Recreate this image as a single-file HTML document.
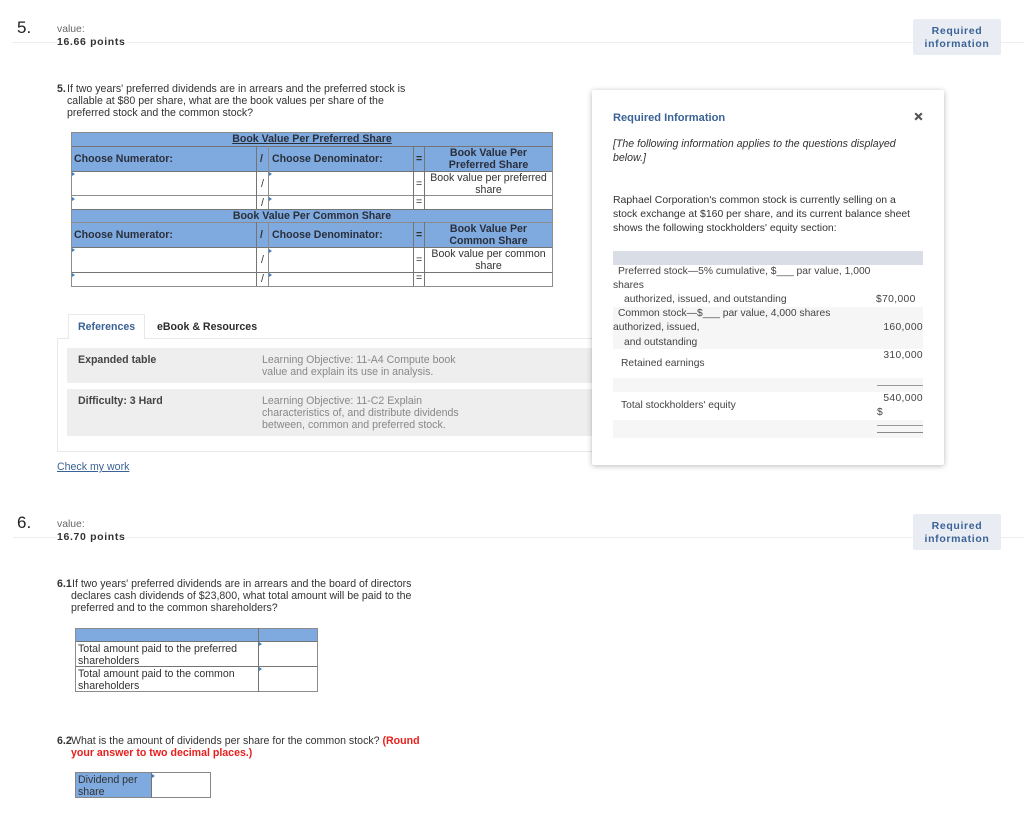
<!DOCTYPE html>
<html><head><meta charset="utf-8">
<style>
html,body{margin:0;padding:0;background:#fff;}
#p{position:relative;width:1024px;height:839px;overflow:hidden;background:#fff;font-family:"Liberation Sans",Arial,sans-serif;color:#333;font-size:10.6px;filter:blur(.25px);}
#p div{position:absolute;}
.t{white-space:nowrap;line-height:14px;height:14px;}
.c{text-align:center;}
.b{font-weight:bold;}
.m{width:0;height:0;border-left:3px solid #3f7fc4;border-top:2px solid transparent;border-bottom:2px solid transparent;}
.l{background:#747474;}
.g{background:#8c8c8c;}
.blue{background:#7eaae0;}
.k{color:#2a2f3a;}
.pop{font-size:10.3px;color:#444;}
.txt{font-size:10.45px;color:#333;}
.rq{background:#e9edf3;border-radius:2px;color:#3a6296;font-weight:bold;font-size:10.5px;letter-spacing:.65px;text-align:center;line-height:13px;}
.n{letter-spacing:.35px;}
</style></head><body>
<div id="p">
<!-- Q5 header -->
<div style="left:12px;top:42px;width:1012px;height:1px;background:#eceef0"></div>
<div class="t" style="left:17px;top:20px;font-size:17px;height:16px;line-height:16px;color:#222">5.</div>
<div class="t" style="left:57px;top:23px;color:#666;font-size:10.4px;background:#fff">value:</div>
<div class="t b" style="left:57px;top:35px;font-size:10.5px;letter-spacing:.65px;background:#fff;padding-right:1px">16.66 points</div>
<div class="rq" style="left:913px;top:19px;width:88px;height:36px"><span style="position:relative;top:6px;display:block">Required<br>information</span></div>

<div class="t" style="left:57px;top:82px"><b>5.</b></div>
<div class="t" style="left:67px;top:82px">If two years' preferred dividends are in arrears and the preferred stock is</div>
<div class="t" style="left:67px;top:94px">callable at $80 per share, what are the book values per share of the</div>
<div class="t" style="left:67px;top:106px">preferred stock and the common stock?</div>

<!-- Table 5 -->
<div class="blue" style="left:72px;top:133px;width:480px;height:38px"></div>
<div class="blue" style="left:72px;top:209px;width:480px;height:38px"></div>
<div class="g" style="left:71px;top:132px;width:482px;height:1px"></div>
<div class="l" style="left:71px;top:146px;width:482px;height:1px"></div>
<div class="l" style="left:71px;top:171px;width:482px;height:1px"></div>
<div class="g" style="left:71px;top:195px;width:482px;height:1px"></div>
<div class="l" style="left:71px;top:209px;width:482px;height:1px"></div>
<div class="g" style="left:71px;top:222px;width:482px;height:1px"></div>
<div class="l" style="left:71px;top:247px;width:482px;height:1px"></div>
<div class="l" style="left:71px;top:272px;width:482px;height:1px"></div>
<div class="g" style="left:71px;top:286px;width:482px;height:1px"></div>
<div class="g" style="left:71px;top:132px;width:1px;height:155px"></div>
<div class="g" style="left:552px;top:132px;width:1px;height:155px"></div>
<div class="l" style="left:256px;top:146px;width:1px;height:63px"></div>
<div class="g" style="left:268px;top:146px;width:1px;height:63px"></div>
<div class="l" style="left:413px;top:146px;width:1px;height:63px"></div>
<div class="l" style="left:424px;top:146px;width:1px;height:63px"></div>
<div class="l" style="left:256px;top:222px;width:1px;height:64px"></div>
<div class="g" style="left:268px;top:222px;width:1px;height:64px"></div>
<div class="l" style="left:413px;top:222px;width:1px;height:64px"></div>
<div class="l" style="left:424px;top:222px;width:1px;height:64px"></div>

<div class="t c b k" style="left:72px;top:132px;width:480px;text-decoration:underline">Book Value Per Preferred Share</div>
<div class="t c b k" style="left:72px;top:209px;width:480px">Book Value Per Common Share</div>

<div class="t b k" style="left:74px;top:152px">Choose Numerator:</div>
<div class="t b" style="left:260px;top:152px">/</div>
<div class="t b k" style="left:272px;top:152px">Choose Denominator:</div>
<div class="t b" style="left:416px;top:152px">=</div>
<div class="t c b k" style="left:425px;top:146px;width:127px">Book Value Per</div>
<div class="t c b k" style="left:425px;top:158px;width:127px">Preferred Share</div>
<div class="t" style="left:261px;top:177px">/</div>
<div class="t" style="left:416px;top:177px">=</div>
<div class="t c" style="left:425px;top:171px;width:127px">Book value per preferred</div>
<div class="t c" style="left:425px;top:183px;width:127px">share</div>
<div class="t" style="left:261px;top:196px">/</div>
<div class="t" style="left:416px;top:195px">=</div>

<div class="t b k" style="left:74px;top:228px">Choose Numerator:</div>
<div class="t b" style="left:260px;top:228px">/</div>
<div class="t b k" style="left:272px;top:228px">Choose Denominator:</div>
<div class="t b" style="left:416px;top:228px">=</div>
<div class="t c b k" style="left:425px;top:222px;width:127px">Book Value Per</div>
<div class="t c b k" style="left:425px;top:234px;width:127px">Common Share</div>
<div class="t" style="left:261px;top:253px">/</div>
<div class="t" style="left:416px;top:253px">=</div>
<div class="t c" style="left:425px;top:247px;width:127px">Book value per common</div>
<div class="t c" style="left:425px;top:259px;width:127px">share</div>
<div class="t" style="left:261px;top:272px">/</div>
<div class="t" style="left:416px;top:271px">=</div>

<div class="m" style="left:72px;top:172px"></div>
<div class="m" style="left:269px;top:172px"></div>
<div class="m" style="left:72px;top:197px"></div>
<div class="m" style="left:269px;top:197px"></div>
<div class="m" style="left:72px;top:248px"></div>
<div class="m" style="left:269px;top:249px"></div>
<div class="m" style="left:72px;top:273px"></div>
<div class="m" style="left:269px;top:273px"></div>

<!-- References -->
<div style="left:57px;top:338px;width:560px;height:114px;border:1px solid #e9e9e9;box-sizing:border-box"></div>
<div style="left:68px;top:314px;width:77px;height:25px;border:1px solid #e9e9e9;border-bottom:0;box-sizing:border-box;background:#fff"></div>
<div class="t b" style="left:78px;top:320px;color:#3a6296">References</div>
<div class="t b" style="left:157px;top:320px;color:#2c2c2c">eBook &amp; Resources</div>
<div style="left:67px;top:348px;width:540px;height:35px;background:#eee"></div>
<div style="left:67px;top:389px;width:540px;height:47px;background:#eee"></div>
<div class="t b" style="left:78px;top:353px;color:#444">Expanded table</div>
<div class="t b" style="left:78px;top:394px;color:#444">Difficulty: 3 Hard</div>
<div class="t" style="left:262px;top:353px;color:#888">Learning Objective: 11-A4 Compute book</div>
<div class="t" style="left:262px;top:365px;color:#888">value and explain its use in analysis.</div>
<div class="t" style="left:262px;top:394px;color:#888">Learning Objective: 11-C2 Explain</div>
<div class="t" style="left:262px;top:406px;color:#888">characteristics of, and distribute dividends</div>
<div class="t" style="left:262px;top:418px;color:#888">between, common and preferred stock.</div>
<div class="t" style="left:57px;top:460px;color:#3a6296;text-decoration:underline">Check my work</div>

<!-- Popup -->
<div style="left:592px;top:90px;width:352px;height:375px;background:#fff;border-radius:2px;box-shadow:0 1px 6px rgba(0,0,0,.28)"></div>
<div class="t b" style="left:613px;top:111px;color:#3a6296;font-size:11.1px">Required Information</div>
<div style="left:914px;top:112px;width:9px;height:9px">
<svg width="9" height="9" viewBox="0 0 9 9" style="display:block"><path d="M1.2 1.2L7.8 7.8M7.8 1.2L1.2 7.8" stroke="#555" stroke-width="2.1" fill="none"/></svg></div>
<div class="t" style="left:613px;top:137px;font-style:italic;color:#333;font-size:10.6px">[The following information applies to the questions displayed</div>
<div class="t" style="left:613px;top:151px;font-style:italic;color:#333;font-size:10.6px">below.]</div>
<div class="t txt" style="left:613px;top:194px">Raphael Corporation's common stock is currently selling on a</div>
<div class="t txt" style="left:613px;top:208px">stock exchange at $160 per share, and its current balance sheet</div>
<div class="t txt" style="left:613px;top:222px">shows the following stockholders' equity section:</div>
<div style="left:613px;top:251px;width:310px;height:14px;background:#d8dde6"></div>
<div style="left:613px;top:307px;width:310px;height:42px;background:#f6f6f6"></div>
<div style="left:613px;top:378px;width:310px;height:14px;background:#f6f6f6"></div>
<div style="left:613px;top:420px;width:310px;height:18px;background:#f6f6f6"></div>
<div style="left:877px;top:385px;width:46px;height:1px;background:#999"></div>
<div style="left:877px;top:425px;width:46px;height:1px;background:#999"></div>
<div style="left:877px;top:432px;width:46px;height:1px;background:#888"></div>
<div class="t pop" style="left:618px;top:265px">Preferred stock&mdash;5% cumulative, $___ par value, 1,000</div>
<div class="t pop" style="left:613px;top:279px">shares</div>
<div class="t pop" style="left:624px;top:293px">authorized, issued, and outstanding</div>
<div class="t pop" style="left:618px;top:307px">Common stock&mdash;$___ par value, 4,000 shares</div>
<div class="t pop" style="left:613px;top:321px">authorized, issued,</div>
<div class="t pop" style="left:624px;top:336px">and outstanding</div>
<div class="t pop" style="left:621px;top:357px">Retained earnings</div>
<div class="t pop" style="left:621px;top:399px">Total stockholders' equity</div>
<div class="t pop n" style="left:876px;top:293px">$70,000</div>
<div class="t pop n" style="right:101px;top:321px">160,000</div>
<div class="t pop n" style="right:101px;top:349px">310,000</div>
<div class="t pop n" style="right:101px;top:392px">540,000</div>
<div class="t pop" style="left:877px;top:406px">$</div>

<!-- Q6 -->
<div style="left:13px;top:537px;width:1011px;height:1px;background:#eceef0"></div>
<div class="t" style="left:17px;top:515px;font-size:17px;height:16px;line-height:16px;color:#222">6.</div>
<div class="t" style="left:57px;top:518px;color:#666;font-size:10.4px;background:#fff">value:</div>
<div class="t b" style="left:57px;top:530px;font-size:10.5px;letter-spacing:.65px;background:#fff;padding-right:1px">16.70 points</div>
<div class="rq" style="left:913px;top:514px;width:88px;height:36px"><span style="position:relative;top:6px;display:block">Required<br>information</span></div>

<div class="t" style="left:57px;top:577px"><b>6.1</b></div>
<div class="t" style="left:72px;top:577px">If two years' preferred dividends are in arrears and the board of directors</div>
<div class="t" style="left:71px;top:589px">declares cash dividends of $23,800, what total amount will be paid to the</div>
<div class="t" style="left:71px;top:601px">preferred and to the common shareholders?</div>

<div class="blue" style="left:76px;top:628px;width:241px;height:14px"></div>
<div class="g" style="left:75px;top:628px;width:243px;height:1px"></div>
<div class="l" style="left:75px;top:641px;width:243px;height:1px"></div>
<div class="l" style="left:75px;top:666px;width:243px;height:1px"></div>
<div class="g" style="left:75px;top:691px;width:243px;height:1px"></div>
<div class="g" style="left:75px;top:628px;width:1px;height:64px"></div>
<div class="g" style="left:317px;top:628px;width:1px;height:64px"></div>
<div class="l" style="left:258px;top:628px;width:1px;height:64px"></div>
<div class="t" style="left:78px;top:642px">Total amount paid to the preferred</div>
<div class="t" style="left:78px;top:654px">shareholders</div>
<div class="t" style="left:78px;top:667px">Total amount paid to the common</div>
<div class="t" style="left:78px;top:679px">shareholders</div>
<div class="m" style="left:259px;top:642px"></div>
<div class="m" style="left:259px;top:667px"></div>

<div class="t" style="left:57px;top:734px"><b>6.2</b></div>
<div class="t" style="left:71px;top:734px">What is the amount of dividends per share for the common stock? <b style="color:#e8201c">(Round</b></div>
<div class="t b" style="left:71px;top:746px;color:#e8201c">your answer to two decimal places.)</div>

<div class="blue" style="left:76px;top:773px;width:75px;height:25px"></div>
<div style="left:75px;top:772px;width:136px;height:26px;border:1px solid #888;box-sizing:border-box"></div>
<div class="l" style="left:151px;top:773px;width:1px;height:25px"></div>
<div class="t" style="left:78px;top:773px">Dividend per</div>
<div class="t" style="left:78px;top:785px">share</div>
<div class="m" style="left:152px;top:774px"></div>
</div>
</body></html>
